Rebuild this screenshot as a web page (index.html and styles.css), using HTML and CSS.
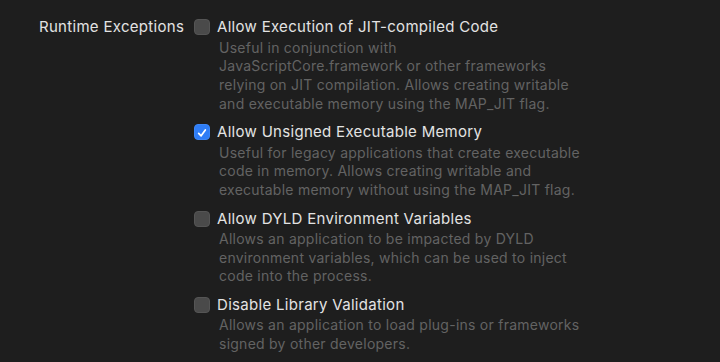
FILE: index.html
```html
<!DOCTYPE html>
<html>
<head>
<meta charset="utf-8">
<link rel="stylesheet" href="styles.css">
</head>
<body>
<div class="row">
  <div class="label">Runtime Exceptions</div>
  <div class="options">
    <div class="option">
      <span class="box"></span>
      <div class="text">
        <div class="title">Allow Execution of JIT-compiled Code</div>
        <div class="desc">Useful in conjunction with JavaScriptCore.framework or other frameworks relying on JIT compilation. Allows creating writable and executable memory using the MAP_JIT flag.</div>
      </div>
    </div>
    <div class="option">
      <span class="box checked"><svg viewBox="0 0 16 16" width="16" height="16"><path d="M4.2 8.4 L7 11.2 L11.8 4.6" fill="none" stroke="#fff" stroke-width="2" stroke-linecap="round" stroke-linejoin="round"/></svg></span>
      <div class="text">
        <div class="title">Allow Unsigned Executable Memory</div>
        <div class="desc">Useful for legacy applications that create executable code in memory. Allows creating writable and executable memory without using the MAP_JIT flag.</div>
      </div>
    </div>
    <div class="option">
      <span class="box"></span>
      <div class="text">
        <div class="title">Allow DYLD Environment Variables</div>
        <div class="desc">Allows an application to be impacted by DYLD environment variables, which can be used to inject code into the process.</div>
      </div>
    </div>
    <div class="option">
      <span class="box"></span>
      <div class="text">
        <div class="title">Disable Library Validation</div>
        <div class="desc">Allows an application to load plug-ins or frameworks signed by other developers.</div>
      </div>
    </div>
  </div>
</div>
</body>
</html>
```
FILE: styles.css
```css
html, body {
  margin: 0;
  background: #1e1e1e;
  height: 100%;
  overflow: hidden;
}
body {
  font-family: Inter, "Liberation Sans", sans-serif;
  -webkit-font-smoothing: antialiased;
}
.row {
  display: flex;
  padding: 17px 0 0 39px;
}
.label {
  width: 148px;
  color: #e3e3e3;
  font-size: 15px;
  letter-spacing: 0.3px;
  line-height: 20px;
  white-space: nowrap;
}
.options {
  display: flex;
  flex-direction: column;
  gap: 8.8px;
  padding-left: 7px;
}
.option {
  display: flex;
  gap: 7px;
}
.box {
  flex: none;
  width: 16px;
  height: 16px;
  margin-top: 2px;
  box-sizing: border-box;
  border-radius: 4px;
  background: #4a4a4a;
  border: 1px solid #555;
  display: flex;
}
.box.checked {
  background: #2f7df6;
  border-color: #3b86f7;
}
.title {
  color: #e3e3e3;
  font-size: 15px;
  letter-spacing: 0.3px;
  line-height: 20px;
}
.desc {
  color: #636363;
  font-size: 14px;
  letter-spacing: 0.25px;
  line-height: 18.7px;
  width: 362px;
  margin-top: 1.5px;
  padding-left: 2px;
}
```
